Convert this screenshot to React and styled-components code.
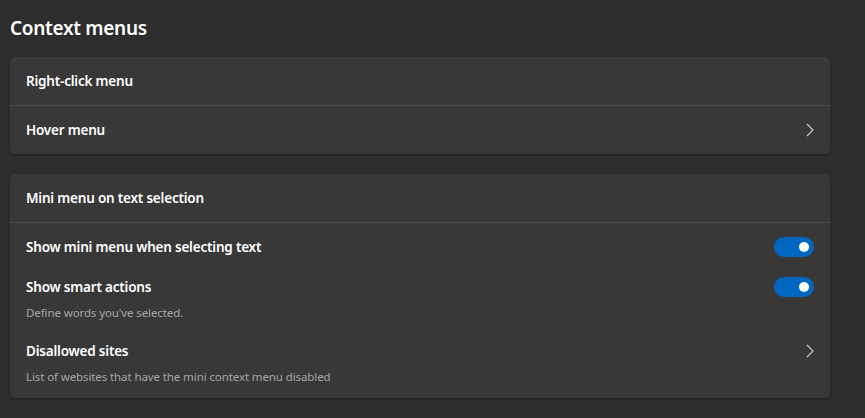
import React from "react";
import styled, { createGlobalStyle } from "styled-components";

const Global = createGlobalStyle`
  html, body {
    margin: 0;
    background: #2d2d2d;
    font-family: "Noto Sans", "Open Sans", sans-serif;
    color: #ffffff;
  }
`;

const Page = styled.div`
  padding: 14px 35px 20px 10px;
  display: flex;
  flex-direction: column;
`;

const Title = styled.h1`
  margin: 0 0 15px;
  font-size: 19px;
  line-height: 28px;
  font-weight: 600;
  letter-spacing: -0.3px;
`;

const Card = styled.div`
  background: #383838;
  border-radius: 5px;
  box-shadow: 0 1px 2px rgba(0, 0, 0, 0.35);
  margin-bottom: 20px;
  overflow: hidden;
`;

const Row = styled.div`
  height: 48px;
  display: flex;
  align-items: center;
  justify-content: space-between;
  padding: 0 16px;
  border-top: ${({ divider }) => (divider ? "1px solid #4a4a4a" : "none")};
`;

const Label = styled.span`
  font-size: 13.5px;
  font-weight: 600;
  line-height: 20px;
  letter-spacing: -0.2px;
`;

const List = styled.div`
  border-top: 1px solid #4a4a4a;
  padding: 14px 16px 13px;
  display: flex;
  flex-direction: column;
  gap: 20px;
`;

const Item = styled.div`
  display: flex;
  align-items: flex-start;
  justify-content: space-between;
`;

const Text = styled.div`
  display: flex;
  flex-direction: column;
`;

const Desc = styled.span`
  margin-top: 8px;
  font-size: 11.5px;
  line-height: 16px;
  color: #a6a6a6;
  letter-spacing: -0.1px;
`;

const Toggle = styled.span`
  width: 40px;
  height: 20px;
  border-radius: 10px;
  background: #0067c0;
  display: flex;
  align-items: center;
  justify-content: flex-end;
  padding-right: 5px;
  box-sizing: border-box;
  &::after {
    content: "";
    width: 10px;
    height: 10px;
    border-radius: 50%;
    background: #ffffff;
  }
`;

const Chevron = () => (
  <svg width="16" height="20" viewBox="0 0 16 20" style={{ marginRight: -4 }}>
    <path d="M5 4 L11 10 L5 16" fill="none" stroke="#cfcfcf" strokeWidth="1.1" />
  </svg>
);

export default function App() {
  return (
    <>
      <Global />
      <Page>
        <Title>Context menus</Title>
        <Card>
          <Row>
            <Label>Right-click menu</Label>
          </Row>
          <Row divider>
            <Label>Hover menu</Label>
            <Chevron />
          </Row>
        </Card>
        <Card>
          <Row>
            <Label>Mini menu on text selection</Label>
          </Row>
          <List>
            <Item>
              <Label>Show mini menu when selecting text</Label>
              <Toggle />
            </Item>
            <Item>
              <Text>
                <Label>Show smart actions</Label>
                <Desc>Define words you've selected.</Desc>
              </Text>
              <Toggle />
            </Item>
            <Item>
              <Text>
                <Label>Disallowed sites</Label>
                <Desc>List of websites that have the mini context menu disabled</Desc>
              </Text>
              <Chevron />
            </Item>
          </List>
        </Card>
      </Page>
    </>
  );
}
